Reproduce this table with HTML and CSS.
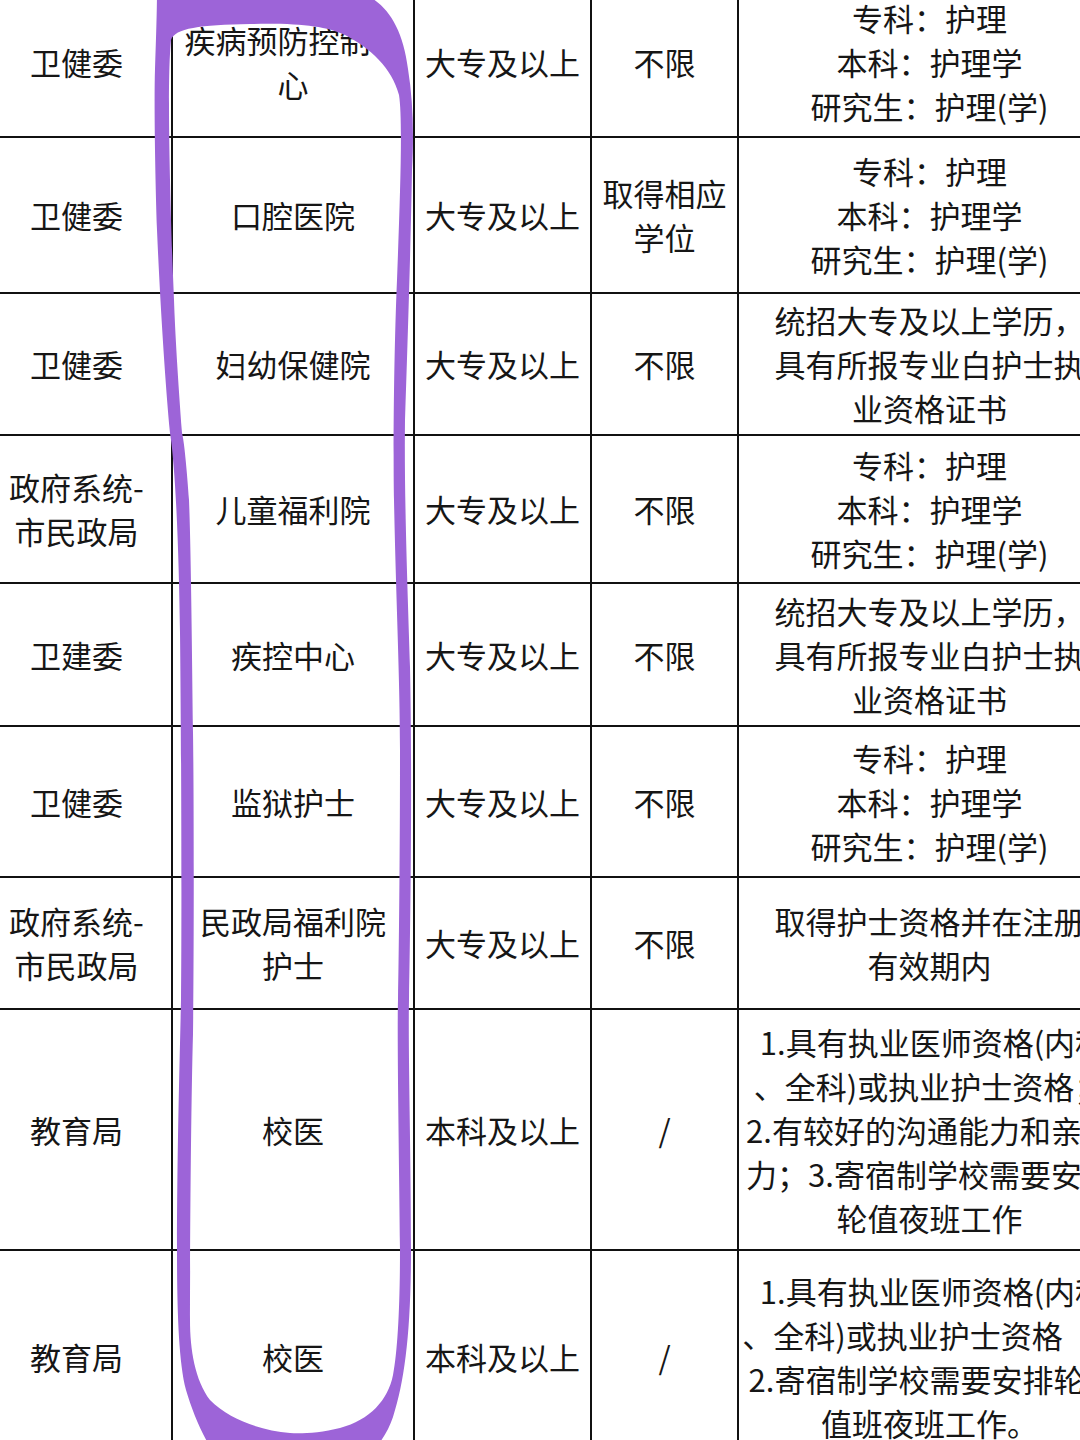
FILE: index.html
```html
<!DOCTYPE html>
<html lang="zh-CN">
<head>
<meta charset="utf-8">
<title>护理岗位表</title>
<link rel="stylesheet" href="styles.css">
</head>
<body>
<div class="page">
  <table class="jobs">
    <colgroup>
      <col class="c1"><col class="c2"><col class="c3"><col class="c4"><col class="c5">
    </colgroup>
    <tbody>
      <tr class="r1">
        <td class="dept">卫健委</td>
        <td>疾病预防控制<span class="tail t31"></span><br>心</td>
        <td>大专及以上</td>
        <td>不限</td>
        <td>专科：护理<br>本科：护理学<br>研究生：护理(学)</td>
      </tr>
      <tr class="r2">
        <td class="dept">卫健委</td>
        <td>口腔医院</td>
        <td>大专及以上</td>
        <td>取得相应<br>学位</td>
        <td>专科：护理<br>本科：护理学<br>研究生：护理(学)</td>
      </tr>
      <tr class="r3">
        <td class="dept">卫健委</td>
        <td>妇幼保健院</td>
        <td>大专及以上</td>
        <td>不限</td>
        <td>统招大专及以上学历，<br>具有所报专业白护士执<br>业资格证书</td>
      </tr>
      <tr class="r4">
        <td class="dept">政府系统-<br>市民政局</td>
        <td>儿童福利院</td>
        <td>大专及以上</td>
        <td>不限</td>
        <td>专科：护理<br>本科：护理学<br>研究生：护理(学)</td>
      </tr>
      <tr class="r5">
        <td class="dept">卫建委</td>
        <td>疾控中心</td>
        <td>大专及以上</td>
        <td>不限</td>
        <td>统招大专及以上学历，<br>具有所报专业白护士执<br>业资格证书</td>
      </tr>
      <tr class="r6">
        <td class="dept">卫健委</td>
        <td>监狱护士</td>
        <td>大专及以上</td>
        <td>不限</td>
        <td>专科：护理<br>本科：护理学<br>研究生：护理(学)</td>
      </tr>
      <tr class="r7">
        <td class="dept">政府系统-<br>市民政局</td>
        <td>民政局福利院<br>护士</td>
        <td>大专及以上</td>
        <td>不限</td>
        <td>取得护士资格并在注册<br>有效期内</td>
      </tr>
      <tr class="r8">
        <td class="dept">教育局</td>
        <td>校医</td>
        <td>本科及以上</td>
        <td>/</td>
        <td>&nbsp;1.具有执业医师资格(内科<br>、全科)或执业护士资格；<br>2.有较好的沟通能力和亲和<br>力；3.寄宿制学校需要安排<br>轮值夜班工作</td>
      </tr>
      <tr class="r9">
        <td class="dept">教育局</td>
        <td>校医</td>
        <td>本科及以上</td>
        <td>/</td>
        <td>&nbsp;1.具有执业医师资格(内科<br>、全科)或执业护士资格<span class="tail t54"></span><br>2.寄宿制学校需要安排轮<span class="tail t26"></span><br>值班夜班工作。</td>
      </tr>
    </tbody>
  </table>
</div>
<svg class="loop" width="1080" height="1440" viewBox="0 0 1080 1440" aria-hidden="true">
  <path fill-rule="evenodd" fill="#9d64d8" d="
    M 157 -10
    L 350 -10
    C 380 -5, 402 20, 408 69
    C 413 100, 414 133, 412 170
    C 411 233, 408 333, 405 420
    C 404 500, 408 600, 410 667
    C 412 760, 411 900, 409 1000
    C 408 1050, 411 1150, 411 1250
    C 411 1330, 405 1380, 393 1417
    C 385 1440, 370 1460, 340 1470
    L 230 1470
    C 210 1455, 195 1420, 186 1390
    C 178 1360, 177 1300, 177 1250
    C 177 1150, 180 1050, 181 1000
    C 182 900, 181 700, 180 633
    C 179 560, 176 470, 170 433
    C 165 380, 160 300, 157 230
    C 155 170, 154 100, 155 69
    C 156 40, 157 10, 157 -10 Z
    M 171 40
    C 175 28, 200 25, 250 24
    C 300 23, 325 26, 345 35
    C 370 48, 392 68, 399 95
    C 403 120, 400 200, 397 280
    C 394 350, 393 450, 394 500
    C 396 600, 400 680, 400 750
    C 400 850, 399 950, 398 1000
    C 397 1040, 399 1150, 400 1250
    C 400 1300, 398 1350, 393 1375
    C 388 1400, 370 1420, 340 1428
    C 320 1433, 300 1434, 290 1433
    C 260 1430, 230 1420, 210 1400
    C 195 1380, 190 1350, 190 1320
    C 190 1250, 191 1100, 193 1034
    C 194 950, 194 800, 193 733
    C 192 650, 191 550, 189 500
    C 187 470, 184 440, 182 433
    C 178 380, 175 330, 174 300
    C 171 230, 169 150, 169 103
    C 169 70, 170 50, 171 40 Z"/>
</svg>
</body>
</html>
```

FILE: styles.css
```css
html, body {
  margin: 0;
  padding: 0;
  width: 1080px;
  height: 1440px;
  overflow: hidden;
  background: #ffffff;
}

body {
  position: relative;
  font-family: "Noto Sans CJK SC", "Noto Sans", sans-serif;
  color: #161616;
}

.page {
  width: 1080px;
  height: 1440px;
  overflow: hidden;
}

.jobs {
  border-collapse: collapse;
  table-layout: fixed;
  width: 1120px;
  margin-top: -12px;
  font-size: 31px;
  line-height: 44px;
}

.c1 { width: 172px; }
.c2 { width: 242px; }
.c3 { width: 177px; }
.c4 { width: 147px; }
.c5 { width: 382px; }

.jobs td {
  border: 2px solid #111111;
  padding: 0;
  text-align: center;
  vertical-align: middle;
  white-space: nowrap;
  overflow: hidden;
}

.jobs td:first-child {
  border-left: none;
  padding-right: 18px;
}

.jobs td:last-child {
  border-right: none;
}

.jobs tr.r1 td { border-top: none; }

.r1 { height: 149px; }
.r2 { height: 156px; }
.r3 { height: 142px; }
.r4 { height: 148px; }
.r5 { height: 143px; }
.r6 { height: 151px; }
.r7 { height: 132px; }
.r8 { height: 241px; }
.r9 { height: 214px; }

.tail {
  display: inline-block;
  height: 1px;
}
.t26 { width: 26px; }
.t31 { width: 31px; }
.t54 { width: 54px; }

.loop {
  position: absolute;
  left: 0;
  top: 0;
  pointer-events: none;
}
```
